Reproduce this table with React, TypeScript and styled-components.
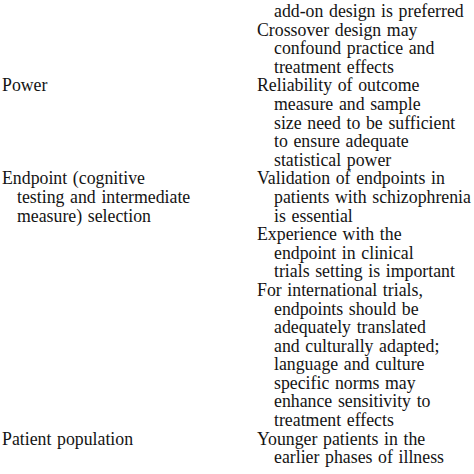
import React from 'react';
import styled, {createGlobalStyle} from 'styled-components';

const GlobalStyle = createGlobalStyle`
  html, body {
    margin: 0;
    padding: 0;
    background: #ffffff;
  }
`;

const Table = styled.div`
  width: 474px;
  height: 474px;
  overflow: hidden;
  box-sizing: border-box;
  padding: 2px 0 0 2px;
  font-family: 'Liberation Serif', 'Times New Roman', serif;
  font-size: 17.8px;
  line-height: 18.6px;
  word-spacing: 1.2px;
  color: #141414;
  background: #ffffff;
`;

const Row = styled.div`
  display: grid;
  grid-template-columns: 255px 1fr;
`;

const Cell = styled.div<{$indent: number}>`
  display: flex;
  flex-direction: column;
  --indent: ${p => p.$indent}px;
`;

const Line = styled.div<{$indent: boolean}>`
  white-space: nowrap;
  padding-left: ${p => (p.$indent ? 'var(--indent)' : '0')};
`;

type Entry = {lines: string[]; continued?: boolean};

const Item = ({lines, continued}: Entry) => (
  <div>
    {lines.map((l, i) => (
      <Line key={i} $indent={continued || i > 0}>
        {l}
      </Line>
    ))}
  </div>
);

const rows: {label: string[]; notes: Entry[]}[] = [
  {
    label: [],
    notes: [
      {lines: ['add-on design is preferred'], continued: true},
      {lines: ['Crossover design may', 'confound practice and', 'treatment effects']},
    ],
  },
  {
    label: ['Power'],
    notes: [
      {
        lines: [
          'Reliability of outcome',
          'measure and sample',
          'size need to be sufficient',
          'to ensure adequate',
          'statistical power',
        ],
      },
    ],
  },
  {
    label: ['Endpoint (cognitive', 'testing and intermediate', 'measure) selection'],
    notes: [
      {lines: ['Validation of endpoints in', 'patients with schizophrenia', 'is essential']},
      {lines: ['Experience with the', 'endpoint in clinical', 'trials setting is important']},
      {
        lines: [
          'For international trials,',
          'endpoints should be',
          'adequately translated',
          'and culturally adapted;',
          'language and culture',
          'specific norms may',
          'enhance sensitivity to',
          'treatment effects',
        ],
      },
    ],
  },
  {
    label: ['Patient population'],
    notes: [{lines: ['Younger patients in the', 'earlier phases of illness']}],
  },
];

export default function App() {
  return (
    <>
      <GlobalStyle />
      <Table>
        {rows.map((r, i) => (
          <Row key={i}>
            <Cell $indent={15}>{r.label.length > 0 && <Item lines={r.label} />}</Cell>
            <Cell $indent={17}>
              {r.notes.map((n, j) => (
                <Item key={j} {...n} />
              ))}
            </Cell>
          </Row>
        ))}
      </Table>
    </>
  );
}
